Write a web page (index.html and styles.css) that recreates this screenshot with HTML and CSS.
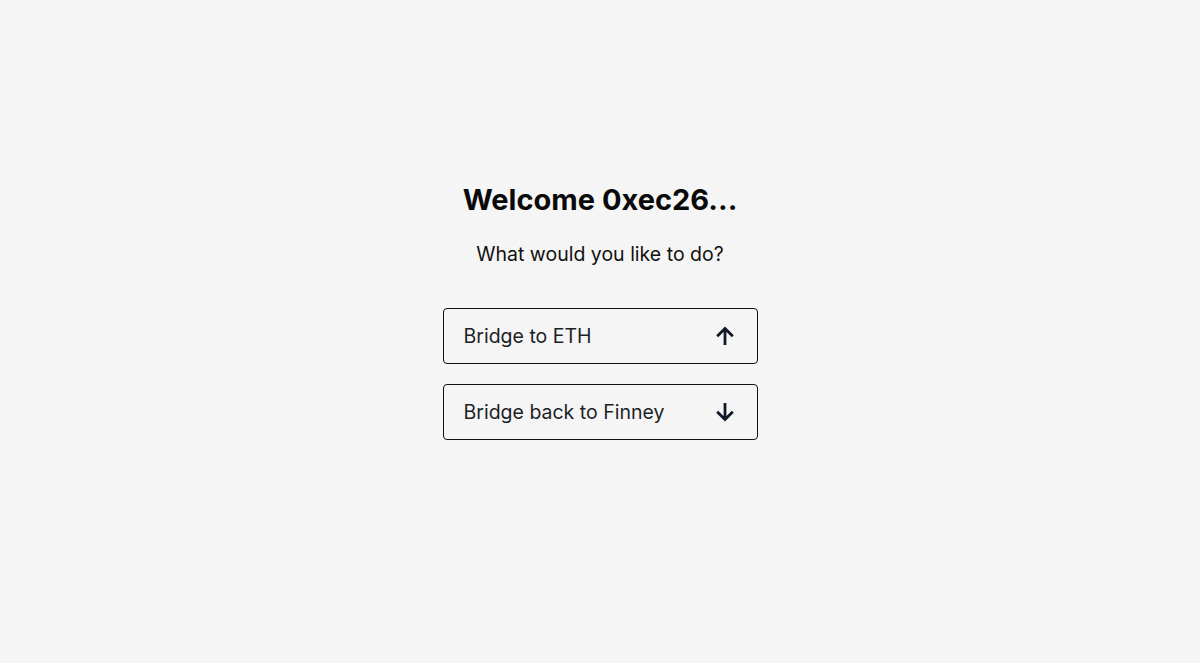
FILE: index.html
```html
<!DOCTYPE html>
<html lang="en">
<head>
<meta charset="utf-8">
<title>Welcome</title>
<link rel="stylesheet" href="styles.css">
</head>
<body>
<main class="page">
  <section class="panel">
    <h1 class="title">Welcome 0xec26...</h1>
    <p class="subtitle">What would you like to do?</p>
    <div class="actions">
      <button class="action" type="button">
        <span class="action-label">Bridge to ETH</span>
        <svg class="action-icon" viewBox="0 0 20 20" width="20" height="20" aria-hidden="true">
          <path d="M10 19V3M2.2 10.2L10 2.4l7.8 7.8" fill="none" stroke="currentColor" stroke-width="2.8" stroke-linecap="butt" stroke-linejoin="miter"/>
        </svg>
      </button>
      <button class="action" type="button">
        <span class="action-label">Bridge back to Finney</span>
        <svg class="action-icon" viewBox="0 0 20 20" width="20" height="20" aria-hidden="true">
          <path d="M10 1v16M2.2 9.8L10 17.6l7.8-7.8" fill="none" stroke="currentColor" stroke-width="2.8" stroke-linecap="butt" stroke-linejoin="miter"/>
        </svg>
      </button>
    </div>
  </section>
</main>
</body>
</html>
```

FILE: styles.css
```css
html, body {
  margin: 0;
  padding: 0;
  background: #f5f5f5;
}

body {
  font-family: Inter, "Noto Sans", sans-serif;
  color: #111;
}

.page {
  min-height: 663px;
  display: flex;
  justify-content: center;
}

.panel {
  margin-top: 180px;
  display: flex;
  flex-direction: column;
  align-items: center;
}

.title {
  margin: 0;
  font-size: 29px;
  font-weight: 700;
  line-height: 40px;
  color: #0a0a0a;
}

.subtitle {
  margin: 20px 0 0;
  font-size: 19.5px;
  line-height: 28px;
  color: #111;
}

.actions {
  margin-top: 40px;
  display: flex;
  flex-direction: column;
  gap: 20px;
}

.action {
  width: 315px;
  height: 56px;
  box-sizing: border-box;
  display: flex;
  align-items: center;
  justify-content: space-between;
  padding: 0 22px 0 20px;
  background: transparent;
  border: 1px solid #111;
  border-radius: 4px;
  font-family: inherit;
  font-size: 19.5px;
  color: #1c1f26;
  cursor: pointer;
}

.action-icon {
  color: #111827;
}
```
